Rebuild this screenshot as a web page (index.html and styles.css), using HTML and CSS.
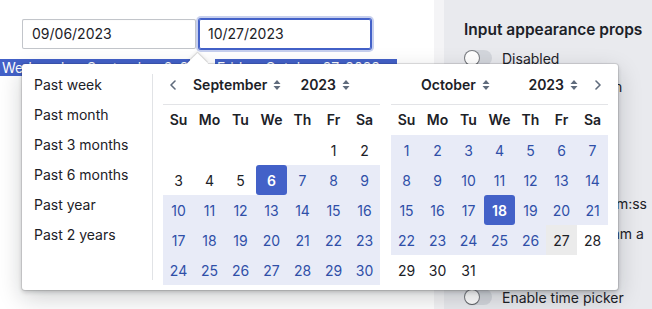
FILE: index.html
```html
<!DOCTYPE html>
<html lang="en">
<head>
<meta charset="utf-8">
<title>Date range input</title>
<link rel="stylesheet" href="styles.css">
</head>
<body>
<div class="page">
  <main class="main">
    <div class="range-input">
      <div class="field">09/06/2023</div>
      <div class="field focused">10/27/2023</div>
    </div>
    <div class="selection">
      <span class="hl hl-a">Wednesday, September 6, 2023</span>
      <span class="hl hl-b">Friday, October 27, 2023</span>
    </div>

    <div class="popover">
      <div class="arrow"></div>
      <div class="popover-body">
        <ul class="shortcuts">
          <li>Past week</li>
          <li>Past month</li>
          <li>Past 3 months</li>
          <li>Past 6 months</li>
          <li>Past year</li>
          <li>Past 2 years</li>
        </ul>
        <div class="vdiv"></div>
        <div class="cals">
          <div class="cal">
            <div class="cal-head">
              <div class="nav prev"><svg width="6" height="10" viewBox="0 0 6 10"><path d="M5 1 L1 5 L5 9" fill="none" stroke="#5f6b7c" stroke-width="1.6" stroke-linecap="round" stroke-linejoin="round"/></svg></div>
              <div class="caption">
                <div class="sel-box">September <svg class="caret" width="8" height="12" viewBox="0 0 8 12"><path d="M0.5 5 L4 1 L7.5 5 Z M0.5 7 L4 11 L7.5 7 Z" fill="#5f6b7c"/></svg></div>
                <div class="sel-box">2023 <svg class="caret" width="8" height="12" viewBox="0 0 8 12"><path d="M0.5 5 L4 1 L7.5 5 Z M0.5 7 L4 11 L7.5 7 Z" fill="#5f6b7c"/></svg></div>
              </div>
              <div class="nav next"></div>
            </div>
            <div class="weekdays"><span>Su</span><span>Mo</span><span>Tu</span><span>We</span><span>Th</span><span>Fr</span><span>Sa</span></div>
            <div class="days">
              <div class="d"></div><div class="d"></div><div class="d"></div><div class="d"></div><div class="d"></div><div class="d"><span>1</span></div><div class="d"><span>2</span></div>
              <div class="d"><span>3</span></div><div class="d"><span>4</span></div><div class="d"><span>5</span></div><div class="d start"><span>6</span></div><div class="d r"><span>7</span></div><div class="d r"><span>8</span></div><div class="d r"><span>9</span></div>
              <div class="d r"><span>10</span></div><div class="d r"><span>11</span></div><div class="d r"><span>12</span></div><div class="d r"><span>13</span></div><div class="d r"><span>14</span></div><div class="d r"><span>15</span></div><div class="d r"><span>16</span></div>
              <div class="d r"><span>17</span></div><div class="d r"><span>18</span></div><div class="d r"><span>19</span></div><div class="d r"><span>20</span></div><div class="d r"><span>21</span></div><div class="d r"><span>22</span></div><div class="d r"><span>23</span></div>
              <div class="d r"><span>24</span></div><div class="d r"><span>25</span></div><div class="d r"><span>26</span></div><div class="d r"><span>27</span></div><div class="d r"><span>28</span></div><div class="d r"><span>29</span></div><div class="d r"><span>30</span></div>
            </div>
          </div>
          <div class="cal">
            <div class="cal-head">
              <div class="nav prev"></div>
              <div class="caption">
                <div class="sel-box">October <svg class="caret" width="8" height="12" viewBox="0 0 8 12"><path d="M0.5 5 L4 1 L7.5 5 Z M0.5 7 L4 11 L7.5 7 Z" fill="#5f6b7c"/></svg></div>
                <div class="sel-box">2023 <svg class="caret" width="8" height="12" viewBox="0 0 8 12"><path d="M0.5 5 L4 1 L7.5 5 Z M0.5 7 L4 11 L7.5 7 Z" fill="#5f6b7c"/></svg></div>
              </div>
              <div class="nav next"><svg width="6" height="10" viewBox="0 0 6 10"><path d="M1 1 L5 5 L1 9" fill="none" stroke="#5f6b7c" stroke-width="1.6" stroke-linecap="round" stroke-linejoin="round"/></svg></div>
            </div>
            <div class="weekdays"><span>Su</span><span>Mo</span><span>Tu</span><span>We</span><span>Th</span><span>Fr</span><span>Sa</span></div>
            <div class="days">
              <div class="d r"><span>1</span></div><div class="d r"><span>2</span></div><div class="d r"><span>3</span></div><div class="d r"><span>4</span></div><div class="d r"><span>5</span></div><div class="d r"><span>6</span></div><div class="d r"><span>7</span></div>
              <div class="d r"><span>8</span></div><div class="d r"><span>9</span></div><div class="d r"><span>10</span></div><div class="d r"><span>11</span></div><div class="d r"><span>12</span></div><div class="d r"><span>13</span></div><div class="d r"><span>14</span></div>
              <div class="d r"><span>15</span></div><div class="d r"><span>16</span></div><div class="d r"><span>17</span></div><div class="d r mid"><span>18</span></div><div class="d r"><span>19</span></div><div class="d r"><span>20</span></div><div class="d r"><span>21</span></div>
              <div class="d r"><span>22</span></div><div class="d r"><span>23</span></div><div class="d r"><span>24</span></div><div class="d r"><span>25</span></div><div class="d r"><span>26</span></div><div class="d hover"><span>27</span></div><div class="d"><span>28</span></div>
              <div class="d"><span>29</span></div><div class="d"><span>30</span></div><div class="d"><span>31</span></div><div class="d"></div><div class="d"></div><div class="d"></div><div class="d"></div>
            </div>
          </div>
        </div>
      </div>
    </div>
  </main>
  <div class="splitter"></div>
  <aside class="sidebar">
    <h2 class="side-title">Input appearance props</h2>
    <div class="sw-row"><span class="track"></span><span>Disabled</span></div>
    <div class="sw-row"><span class="track"></span><span>Show reset button</span></div>
    <div class="sw-row"><span class="track"></span><span>Fill</span></div>
    <div class="sw-row"><span class="track"></span><span>Large</span></div>
    <div class="group-label">Date format</div>
    <div class="radio-row"><span class="radio"></span><span>YYYY-MM-DD H:mm:ss</span></div>
    <div class="radio-row"><span class="radio"></span><span>MM/DD/YYYY hh:mm a</span></div>
    <div class="sw-row time"><span class="track"></span><span>Enable time picker</span></div>
  </aside>
</div>
</body>
</html>
```

FILE: styles.css
```css
html, body {
  margin: 0;
  padding: 0;
}

body {
  font-family: Inter, "Noto Sans", "Liberation Sans", sans-serif;
  font-size: 14px;
  color: #1c2127;
}

.page {
  position: relative;
  display: flex;
  width: 652px;
  height: 309px;
  overflow: hidden;
}

.main {
  width: 434px;
  flex: none;
  box-sizing: border-box;
  background: #fff;
  padding: 19px 0 0 22px;
}

.splitter {
  width: 10px;
  flex: none;
  background: #f4f4f6;
}

.sidebar {
  flex: 1;
  background: #e9eaee;
  padding: 20px 0 0 20px;
}

/* inputs */
.range-input {
  display: flex;
  gap: 3px;
}

.field {
  width: 174px;
  height: 30px;
  box-sizing: border-box;
  padding: 0 10px;
  line-height: 30px;
  border-radius: 2px;
  box-shadow: inset 0 0 0 1px #c2c5ca, inset 0 1px 1px rgba(17, 20, 24, 0.12);
}

.field.focused {
  width: 172px;
  padding: 0 9px;
  box-shadow: inset 0 0 0 1px #4361c8, 0 0 0 1px #4361c8, 0 0 0 3px rgba(67, 97, 200, 0.3);
}

.selection {
  display: flex;
  margin: 10px 0 0 -22px;
  height: 17px;
}

.hl {
  display: block;
  height: 17px;
  overflow: hidden;
  white-space: nowrap;
  background: #4361c8;
  color: #fff;
  font-size: 14px;
  line-height: 17px;
  padding-left: 2px;
  box-sizing: border-box;
}

.hl-a { width: 190px; }
.hl-b { width: 182px; margin-left: 25px; }

/* popover */
.popover {
  position: absolute;
  left: 22px;
  top: 64px;
  z-index: 5;
}

.popover-body {
  position: relative;
  display: flex;
  background: #fff;
  border-radius: 3px;
  box-shadow: 0 0 0 1px rgba(17, 20, 24, 0.1), 0 2px 4px rgba(17, 20, 24, 0.2), 0 8px 24px rgba(17, 20, 24, 0.2);
}

.arrow {
  position: absolute;
  left: 168px;
  top: -8px;
  width: 15px;
  height: 15px;
  background: #fff;
  transform: rotate(45deg);
  box-shadow: -1px -1px 0 rgba(17, 20, 24, 0.1), -2px -2px 3px rgba(17, 20, 24, 0.06);
  z-index: 2;
}

.shortcuts {
  list-style: none;
  margin: 0;
  padding: 6px 0 0 0;
  width: 130px;
}

.shortcuts li {
  height: 30px;
  line-height: 30px;
  padding-left: 12px;
}

.vdiv {
  width: 1px;
  background: #e1e3e6;
  margin: 10px 0;
}

.cals {
  display: flex;
  gap: 11px;
  padding: 10px 10px 5px 10px;
}

.cal {
  width: 217px;
}

.cal-head {
  display: flex;
  align-items: center;
  height: 22px;
  padding-bottom: 8px;
  border-bottom: 1px solid #e3e4e7;
}

.nav {
  width: 30px;
  height: 22px;
  flex: none;
  box-sizing: border-box;
  display: flex;
  align-items: center;
}

.nav.prev { padding-left: 7px; }
.nav.next { justify-content: flex-end; padding-right: 7px; }

.caption {
  flex: 1;
  display: flex;
  justify-content: space-between;
  align-items: center;
}

.sel-box {
  display: flex;
  align-items: center;
  gap: 6px;
  font-weight: 600;
  line-height: 18px;
}

.caret { display: block; }

.weekdays {
  display: grid;
  grid-template-columns: repeat(7, 31px);
  height: 30px;
}

.weekdays span {
  text-align: center;
  font-weight: 600;
  padding-top: 6px;
  line-height: 18px;
}

.days {
  display: grid;
  grid-template-columns: repeat(7, 31px);
  grid-auto-rows: 30px;
}

.d {
  display: flex;
}

.d span {
  flex: 1;
  display: flex;
  align-items: center;
  justify-content: center;
  border-radius: 3px;
}

.d.r {
  background: #e8ebf7;
  color: #2f4fa8;
}

.d.start {
  background: linear-gradient(to right, transparent 50%, #e8ebf7 50%);
}

.d.start span,
.d.mid span {
  background: #4361c8;
  color: #fff;
  font-weight: 600;
}

.d.hover span {
  background: #ebebeb;
  border-radius: 0;
}

/* sidebar */
.side-title {
  margin: 0 0 4px 0;
  font-size: 15.5px;
  font-weight: 600;
  line-height: 20px;
  white-space: nowrap;
}

.sw-row {
  display: flex;
  align-items: center;
  gap: 10px;
  height: 28px;
  white-space: nowrap;
}

.track {
  position: relative;
  width: 28px;
  height: 16px;
  border-radius: 8px;
  background: #d3d6dc;
  flex: none;
}

.track::after {
  content: "";
  position: absolute;
  left: 1px;
  top: 1px;
  width: 14px;
  height: 14px;
  border-radius: 50%;
  background: #fff;
  box-shadow: 0 0 0 1px rgba(17, 20, 24, 0.45), 0 1px 1px rgba(17, 20, 24, 0.3);
}

.group-label {
  height: 32px;
  line-height: 32px;
}

.radio-row {
  display: flex;
  align-items: center;
  gap: 10px;
  height: 30px;
  white-space: nowrap;
}

.radio {
  width: 16px;
  height: 16px;
  border-radius: 50%;
  background: #fff;
  box-shadow: inset 0 0 0 1px #9aa0a8;
  flex: none;
}

.sw-row.time {
  margin-top: 35px;
}
```
